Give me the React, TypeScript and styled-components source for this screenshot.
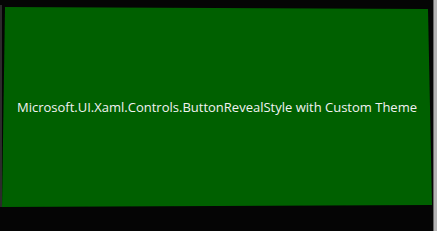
import React from "react";
import styled, { createGlobalStyle } from "styled-components";

const GlobalStyle = createGlobalStyle`
  html, body {
    margin: 0;
    padding: 0;
    background: #050505;
  }
`;

const Stage = styled.div`
  width: 437px;
  height: 231px;
  display: flex;
  align-items: flex-start;
  background: #050505;
  overflow: hidden;
`;

const LeftRail = styled.div`
  width: 2px;
  height: 202px;
  margin-top: 5px;
  background: #2b2b2b;
  flex-shrink: 0;
`;

const Panel = styled.div`
  width: 430px;
  height: 200px;
  margin-top: 7px;
  flex-shrink: 0;
  background: #006000;
  clip-path: polygon(3px 0, 426px 2px, 430px 198px, 0 200px);
  display: flex;
  align-items: center;
  justify-content: center;
`;

const Label = styled.span`
  font-family: "Open Sans", "Noto Sans", sans-serif;
  font-size: 13px;
  color: #f2f2f2;
  white-space: nowrap;
  margin-top: -1px;
`;

const Gap = styled.div`
  flex: 1;
`;

const RightRail = styled.div`
  width: 3px;
  height: 231px;
  background: #b4b4b4;
  border-left: 1px solid #6a6a6a;
  flex-shrink: 0;
`;

export default function App() {
  return (
    <>
      <GlobalStyle />
      <Stage>
        <LeftRail />
        <Panel>
          <Label>Microsoft.UI.Xaml.Controls.ButtonRevealStyle with Custom Theme</Label>
        </Panel>
        <Gap />
        <RightRail />
      </Stage>
    </>
  );
}
